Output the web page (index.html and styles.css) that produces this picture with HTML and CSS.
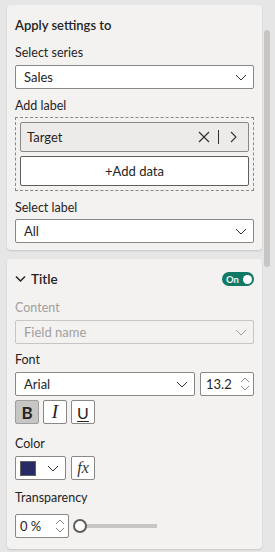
FILE: index.html
```html
<!DOCTYPE html>
<html lang="en">
<head>
	<meta charset="UTF-8" />
	<meta name="viewport" content="width=device-width, initial-scale=1.0" />
	<title>Format pane</title>
	<link rel="stylesheet" href="styles.css">
</head>
<body>
	<div class="pane">
		<div class="cards">
			<section class="card">
				<h2 class="card-heading">Apply settings to</h2>

				<div class="field">
					<span class="label">Select series</span>
					<div class="select">
						<span>Sales</span>
						<svg class="chev" viewBox="0 0 12 12"><polyline points="1,4 6,9 11,4" /></svg>
					</div>
				</div>

				<div class="field">
					<span class="label label-tight">Add label</span>
					<div class="drop-zone">
						<div class="chip">
							<span class="chip-text">Target</span>
							<svg class="chip-x" viewBox="0 0 12 12"><path d="M1,1 L11,11 M11,1 L1,11" /></svg>
							<span class="chip-sep"></span>
							<svg class="chip-next" viewBox="0 0 8 12"><polyline points="2,1 7,6 2,11" /></svg>
						</div>
						<button class="add-data">+Add data</button>
					</div>
				</div>

				<div class="field">
					<span class="label label-tight">Select label</span>
					<div class="select">
						<span>All</span>
						<svg class="chev" viewBox="0 0 12 12"><polyline points="1,4 6,9 11,4" /></svg>
					</div>
				</div>
			</section>

			<section class="card card-title">
				<div class="card-head">
					<div class="card-head-left">
						<svg class="head-chev" viewBox="0 0 12 12"><polyline points="1,3.5 5.5,8 10,3.5" /></svg>
						<span class="card-head-text">Title</span>
					</div>
					<div class="toggle"><span>On</span><i class="toggle-knob"></i></div>
				</div>

				<div class="field">
					<span class="label is-disabled">Content</span>
					<div class="select select-disabled">
						<span>Field name</span>
						<svg class="chev" viewBox="0 0 12 12"><polyline points="1,4 6,9 11,4" /></svg>
					</div>
				</div>

				<div class="field field-font">
					<span class="label">Font</span>
					<div class="row">
						<div class="select select-font">
							<span>Arial</span>
							<svg class="chev" viewBox="0 0 12 12"><polyline points="1,4 6,9 11,4" /></svg>
						</div>
						<div class="spin spin-size">
							<span>13.2</span>
							<svg class="spin-arrows" viewBox="0 0 10 16"><polyline points="1,6 5,2 9,6" /><polyline points="1,10 5,14 9,10" /></svg>
						</div>
					</div>
					<div class="row row-style">
						<button class="icon-btn is-pressed btn-b">B</button>
						<button class="icon-btn btn-i">I</button>
						<button class="icon-btn btn-u">U</button>
					</div>
				</div>

				<div class="field field-color">
					<span class="label">Color</span>
					<div class="row">
						<div class="color-pick">
							<span class="swatch"></span>
							<svg class="chev" viewBox="0 0 12 12"><polyline points="1,4 6,9 11,4" /></svg>
						</div>
						<button class="icon-btn btn-fx">fx</button>
					</div>
				</div>

				<div class="field field-trans">
					<span class="label">Transparency</span>
					<div class="row row-trans">
						<div class="spin spin-pct">
							<span>0 %</span>
							<svg class="spin-arrows" viewBox="0 0 10 16"><polyline points="1,6 5,2 9,6" /><polyline points="1,10 5,14 9,10" /></svg>
						</div>
						<div class="slider">
							<span class="slider-thumb"></span>
							<span class="slider-track"></span>
						</div>
					</div>
				</div>
			</section>
		</div>
		<div class="scrollbar"><div class="scroll-thumb"></div></div>
	</div>
</body>
</html>
```

FILE: styles.css
```css
*,
*:after,
*:before {
	box-sizing: border-box;
}

body {
	margin: 0;
	background: #e6e6e6;
	font-family: Lato, 'Liberation Sans', sans-serif;
	font-size: 12.5px;
	color: #252423;
}

.pane {
	display: flex;
	height: 552px;
	overflow: hidden;
}

.cards {
	width: 262px;
	padding: 5px 0 0 7px;
	display: flex;
	flex-direction: column;
	gap: 9px;
}

.scrollbar {
	width: 6px;
	margin-left: 2px;
	padding-top: 30px;
}

.scroll-thumb {
	height: 237px;
	border-radius: 3px;
	background: #c8c6c4;
}

.card {
	background: #f3f2f1;
	border-radius: 4px;
	box-shadow: 0 1px 2px rgba(0, 0, 0, 0.14);
	padding: 12px 8px 7px;
}

.card-title {
	padding-bottom: 11px;
}

.card-heading {
	margin: 0 0 12px;
	font-size: 13px;
	font-weight: 600;
	line-height: 16px;
}

.label {
	display: block;
	line-height: 16px;
	margin-bottom: 4px;
}

.label-tight {
	margin-bottom: 3px;
}

.is-disabled {
	color: #a19f9d;
}

.field + .field {
	margin-top: 9px;
}

.select {
	height: 24px;
	display: flex;
	align-items: center;
	justify-content: space-between;
	padding: 0 6px 0 8px;
	background: #fff;
	border: 1px solid #8a8886;
	border-radius: 2px;
	font-size: 13px;
}

.chev {
	width: 12px;
	height: 12px;
	fill: none;
	stroke: #323130;
	stroke-width: 1;
}

.select-disabled {
	background: transparent;
	border-color: #c8c6c4;
	color: #a19f9d;
}

.select-disabled .chev {
	stroke: #a19f9d;
}

.drop-zone {
	border: 1px dashed #8a8886;
	padding: 4px;
	display: flex;
	flex-direction: column;
	gap: 4px;
}

.chip {
	height: 30px;
	display: flex;
	align-items: center;
	padding: 0 11px 0 6px;
	background: #edebe9;
	border: 1px solid #8a8886;
	border-radius: 2px;
	font-size: 13px;
}

.chip-text {
	flex: 1;
}

.chip-x {
	width: 12px;
	height: 12px;
	stroke: #323130;
	stroke-width: 1.2;
}

.chip-sep {
	width: 1px;
	height: 14px;
	margin-left: 8px;
	background: #323130;
}

.chip-next {
	width: 8px;
	height: 12px;
	margin-left: 10px;
	fill: none;
	stroke: #323130;
	stroke-width: 1.1;
}

.add-data {
	height: 30px;
	background: #fff;
	border: 1px solid #605e5c;
	border-radius: 2px;
	font-family: inherit;
	font-size: 13px;
	color: #252423;
}

.card-head {
	height: 16px;
	display: flex;
	align-items: center;
	justify-content: space-between;
	margin-bottom: 13px;
}

.card-head-left {
	display: flex;
	align-items: center;
	gap: 4px;
}

.head-chev {
	width: 12px;
	height: 12px;
	fill: none;
	stroke: #252423;
	stroke-width: 1.5;
}

.card-head-text {
	font-size: 13.5px;
	font-weight: 600;
	line-height: 16px;
}

.toggle {
	width: 32px;
	height: 14px;
	border-radius: 7px;
	background: #117865;
	display: flex;
	align-items: center;
	justify-content: space-between;
	padding: 0 2px 0 4px;
	color: #f3f2f1;
	font-size: 9.5px;
	font-weight: 700;
}

.toggle-knob {
	width: 9px;
	height: 9px;
	border-radius: 50%;
	background: #fff;
}

.row {
	display: flex;
	gap: 5px;
}

.field-font {
	margin-top: 8px !important;
}

.select-font {
	width: 180px;
}

.spin {
	height: 24px;
	display: flex;
	align-items: center;
	justify-content: space-between;
	background: #fff;
	border: 1px solid #8a8886;
	border-radius: 2px;
	padding: 0 3px 0 5px;
	font-size: 13px;
}

.spin-size {
	flex: 1;
}

.spin-arrows {
	width: 10px;
	height: 16px;
	fill: none;
	stroke: #8a8886;
	stroke-width: 1;
}

.row-style {
	margin-top: 4px;
	gap: 4px;
}

.icon-btn {
	width: 24px;
	height: 24px;
	padding: 0;
	display: flex;
	align-items: center;
	justify-content: center;
	background: #fff;
	border: 1px solid #8a8886;
	border-radius: 2px;
	color: #252423;
	font-family: Lato, 'Liberation Sans', sans-serif;
}

.is-pressed {
	background: #c8c6c4;
	border-color: #a19f9d;
}

.btn-b {
	font-size: 17px;
	font-weight: 700;
}

.btn-i {
	font-family: 'Liberation Serif', serif;
	font-style: italic;
	font-size: 19px;
}

.btn-u {
	font-size: 16px;
	text-decoration: underline;
	text-underline-offset: 2px;
}

.field-color {
	margin-top: 12px !important;
}

.color-pick {
	width: 51px;
	height: 24px;
	display: flex;
	align-items: center;
	justify-content: space-between;
	padding: 0 6px 0 4px;
	background: #fff;
	border: 1px solid #8a8886;
	border-radius: 2px;
}

.swatch {
	width: 16px;
	height: 15px;
	background: #262a66;
	border: 1px solid #605e5c;
}

.btn-fx {
	font-family: 'Liberation Serif', serif;
	font-style: italic;
	font-size: 16px;
	color: #323130;
}

.field-trans {
	margin-top: 10px !important;
}

.field-trans .label {
	margin-bottom: 8px;
}

.row-trans {
	align-items: center;
	gap: 4px;
}

.spin-pct {
	width: 54px;
	padding-left: 4px;
}

.slider {
	display: flex;
	align-items: center;
}

.slider-thumb {
	position: relative;
	z-index: 1;
	width: 14px;
	height: 14px;
	border: 2px solid #605e5c;
	border-radius: 50%;
	background: #fff;
}

.slider-track {
	width: 71px;
	height: 4px;
	margin-left: -1px;
	background: #c8c6c4;
}
```
